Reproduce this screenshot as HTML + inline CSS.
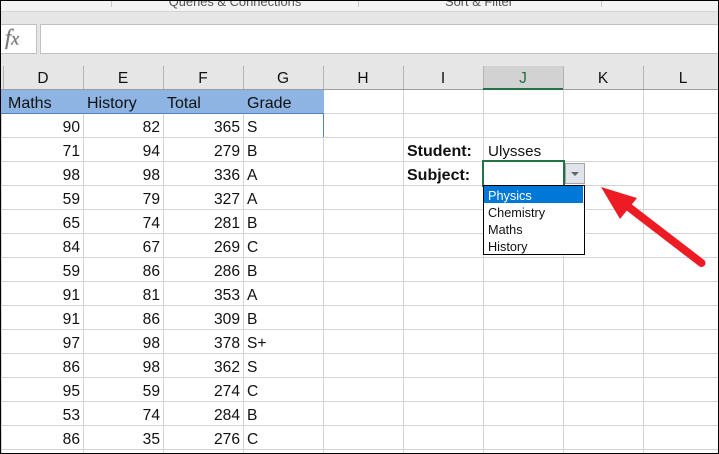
<!DOCTYPE html>
<html><head><meta charset="utf-8">
<style>
html,body{margin:0;padding:0;background:#fff;width:719px;height:454px;overflow:hidden}
svg{display:block}
text{font-family:"Liberation Sans",sans-serif;fill:#111}
.n{font-size:15.6px;text-anchor:end}
.g{font-size:15.6px}
.h{font-size:16px}
.c{font-size:15.5px;text-anchor:middle}
.d{font-size:12.7px}
.b{font-size:16px;font-weight:bold}
</style></head><body>
<svg width="719" height="454" viewBox="0 0 719 454" xmlns="http://www.w3.org/2000/svg">
<rect width="719" height="454" fill="#fff"/>
<!-- ribbon -->
<rect x="0" y="0" width="719" height="11" fill="#f3f3f3"/>
<rect x="0" y="11" width="719" height="1" fill="#d4d4d4"/>
<rect x="0" y="12" width="719" height="12" fill="#e6e6e6"/>
<rect x="0" y="24" width="719" height="1" fill="#c0c0c0"/>
<rect x="0" y="25" width="719" height="28" fill="#fff"/>
<rect x="0" y="53" width="719" height="1" fill="#c0c0c0"/>
<rect x="0" y="54" width="719" height="35" fill="#e6e6e6"/>
<rect x="36" y="24" width="4" height="30" fill="#e6e6e6"/>
<rect x="36" y="24" width="1" height="30" fill="#c0c0c0"/>
<rect x="40" y="24" width="1" height="30" fill="#c0c0c0"/>
<rect x="111" y="1" width="1" height="6" fill="#c8c8c8"/>
<rect x="358" y="1" width="1" height="6" fill="#c8c8c8"/>
<rect x="601" y="1" width="1" height="6" fill="#c8c8c8"/>
<text x="235" y="6" text-anchor="middle" style="font-size:12.9px;fill:#555">Queries &amp; Connections</text>
<text x="479" y="6" text-anchor="middle" style="font-size:12.9px;fill:#555">Sort &amp; Filter</text>
<text x="5" y="44.5" style="font-family:'Liberation Serif',serif;font-style:italic;font-size:22px;fill:#7a7a7a;stroke:#7a7a7a;stroke-width:.35">f<tspan font-size="18" dx="0">x</tspan></text>
<!-- column headers -->
<rect x="483" y="66" width="80" height="22" fill="#d2d2d2"/>
<rect x="3" y="66" width="1" height="23" fill="#b4b4b4"/>
<rect x="83" y="66" width="1" height="23" fill="#b4b4b4"/>
<rect x="163" y="66" width="1" height="23" fill="#b4b4b4"/>
<rect x="243" y="66" width="1" height="23" fill="#b4b4b4"/>
<rect x="323" y="66" width="1" height="23" fill="#b4b4b4"/>
<rect x="403" y="66" width="1" height="23" fill="#b4b4b4"/>
<rect x="483" y="66" width="1" height="23" fill="#b4b4b4"/>
<rect x="563" y="66" width="1" height="23" fill="#b4b4b4"/>
<rect x="643" y="66" width="1" height="23" fill="#b4b4b4"/>
<rect x="0" y="89" width="719" height="1" fill="#9c9c9c"/>
<rect x="483" y="88" width="80" height="2" fill="#217346"/>
<text class="c" x="43" y="83">D</text><text class="c" x="123" y="83">E</text><text class="c" x="203" y="83">F</text><text class="c" x="283" y="83">G</text><text class="c" x="363" y="83">H</text><text class="c" x="443" y="83">I</text><text class="c" x="523" y="83" style="fill:#217346">J</text><text class="c" x="603" y="83">K</text><text class="c" x="683" y="83">L</text>
<!-- grid -->
<g fill="#d4d4d4">
<rect x="1" y="90" width="1" height="364"/>
<rect x="83" y="90" width="1" height="364"/>
<rect x="163" y="90" width="1" height="364"/>
<rect x="243" y="90" width="1" height="364"/>
<rect x="323" y="90" width="1" height="364"/>
<rect x="403" y="90" width="1" height="364"/>
<rect x="483" y="90" width="1" height="364"/>
<rect x="563" y="90" width="1" height="364"/>
<rect x="643" y="90" width="1" height="364"/>
<rect x="1" y="113" width="717" height="1"/>
<rect x="1" y="137" width="717" height="1"/>
<rect x="1" y="161" width="717" height="1"/>
<rect x="1" y="185" width="717" height="1"/>
<rect x="1" y="209" width="717" height="1"/>
<rect x="1" y="233" width="717" height="1"/>
<rect x="1" y="257" width="717" height="1"/>
<rect x="1" y="281" width="717" height="1"/>
<rect x="1" y="305" width="717" height="1"/>
<rect x="1" y="329" width="717" height="1"/>
<rect x="1" y="353" width="717" height="1"/>
<rect x="1" y="377" width="717" height="1"/>
<rect x="1" y="401" width="717" height="1"/>
<rect x="1" y="425" width="717" height="1"/>
<rect x="1" y="449" width="717" height="1"/>
</g>
<!-- table header -->
<rect x="1" y="90" width="323" height="23" fill="#8db4e2"/>
<rect x="1" y="113" width="323" height="1" fill="#4f81bd"/>
<rect x="323" y="113" width="1" height="24" fill="#4f81bd"/>
<text class="h" x="8" y="108">Maths</text><text class="h" x="87" y="108">History</text><text class="h" x="167" y="108">Total</text><text class="h" x="247" y="108">Grade</text>
<!-- data -->
<text class="n" x="80" y="132">90</text><text class="n" x="160" y="132">82</text><text class="n" x="240" y="132">365</text><text class="g" x="247" y="132">S</text>
<text class="n" x="80" y="156">71</text><text class="n" x="160" y="156">94</text><text class="n" x="240" y="156">279</text><text class="g" x="247" y="156">B</text>
<text class="n" x="80" y="180">98</text><text class="n" x="160" y="180">98</text><text class="n" x="240" y="180">336</text><text class="g" x="247" y="180">A</text>
<text class="n" x="80" y="204">59</text><text class="n" x="160" y="204">79</text><text class="n" x="240" y="204">327</text><text class="g" x="247" y="204">A</text>
<text class="n" x="80" y="228">65</text><text class="n" x="160" y="228">74</text><text class="n" x="240" y="228">281</text><text class="g" x="247" y="228">B</text>
<text class="n" x="80" y="252">84</text><text class="n" x="160" y="252">67</text><text class="n" x="240" y="252">269</text><text class="g" x="247" y="252">C</text>
<text class="n" x="80" y="276">59</text><text class="n" x="160" y="276">86</text><text class="n" x="240" y="276">286</text><text class="g" x="247" y="276">B</text>
<text class="n" x="80" y="300">91</text><text class="n" x="160" y="300">81</text><text class="n" x="240" y="300">353</text><text class="g" x="247" y="300">A</text>
<text class="n" x="80" y="324">91</text><text class="n" x="160" y="324">86</text><text class="n" x="240" y="324">309</text><text class="g" x="247" y="324">B</text>
<text class="n" x="80" y="348">97</text><text class="n" x="160" y="348">98</text><text class="n" x="240" y="348">378</text><text class="g" x="247" y="348">S+</text>
<text class="n" x="80" y="372">86</text><text class="n" x="160" y="372">98</text><text class="n" x="240" y="372">362</text><text class="g" x="247" y="372">S</text>
<text class="n" x="80" y="396">95</text><text class="n" x="160" y="396">59</text><text class="n" x="240" y="396">274</text><text class="g" x="247" y="396">C</text>
<text class="n" x="80" y="420">53</text><text class="n" x="160" y="420">74</text><text class="n" x="240" y="420">284</text><text class="g" x="247" y="420">B</text>
<text class="n" x="80" y="444">86</text><text class="n" x="160" y="444">35</text><text class="n" x="240" y="444">276</text><text class="g" x="247" y="444">C</text>
<!-- student -->
<text class="b" x="407" y="156">Student:</text>
<text class="b" x="407" y="180">Subject:</text>
<text x="488" y="156" style="font-size:15.2px">Ulysses</text>
<!-- selected cell -->
<rect x="484" y="162" width="79" height="23" fill="#fff"/>
<rect x="483" y="161" width="81" height="25" fill="none" stroke="#217346" stroke-width="2"/>
<!-- dropdown button -->
<rect x="565.5" y="163.5" width="19" height="20" fill="#e1e4ea" stroke="#a3a3a3"/>
<path d="M571 172h8l-4 4z" fill="#666"/>
<!-- list -->
<rect x="483.5" y="185.5" width="101" height="69" fill="#fff" stroke="#000"/>
<rect x="484" y="186" width="99" height="17" fill="#0078d7"/>
<text class="d" x="488" y="200" style="fill:#fff">Physics</text>
<text class="d" x="488" y="217">Chemistry</text>
<text class="d" x="488" y="234">Maths</text>
<text class="d" x="488" y="251">History</text>
<!-- arrow -->
<path d="M626 205L701.5 263" stroke="#ed1c24" stroke-width="8" stroke-linecap="round" fill="none"/>
<path d="M601 187L637 198L620 219Z" fill="#ed1c24"/>
<!-- frame -->
<rect x="0" y="0" width="719" height="1" fill="#000"/>
<rect x="0" y="453" width="719" height="1" fill="#000"/>
<rect x="0" y="0" width="1" height="454" fill="#000"/>
<rect x="718" y="0" width="1" height="454" fill="#000"/>
</svg>
</body></html>
